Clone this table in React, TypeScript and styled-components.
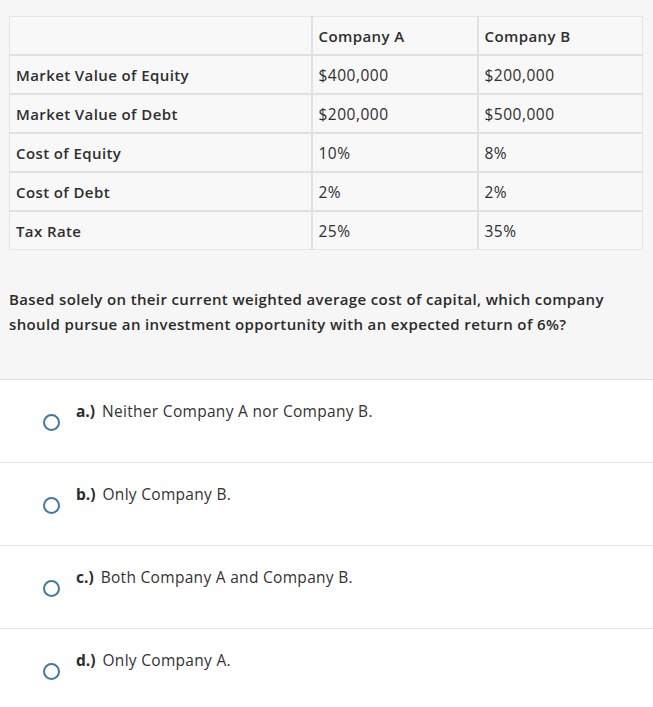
import React from "react";
import styled, { createGlobalStyle } from "styled-components";

const Global = createGlobalStyle`
  html, body { margin: 0; padding: 0; background: #ffffff; }
  body { font-family: "Open Sans", "Lato", Arial, sans-serif; color: #333333; }
`;

const Page = styled.div`
  width: 653px;
`;

const Top = styled.section`
  background: #f6f6f6;
  padding: 16px 11px 42px 9px;
  border-bottom: 1px solid #e3e3e3;
`;

const Table = styled.table`
  width: 633px;
  border-collapse: collapse;
  table-layout: fixed;
  border: 1px solid #e6e6e6;
  background: #f8f8f8;
`;

const Cell = styled.td<{ $head?: boolean; $label?: boolean }>`
  height: 37px;
  padding: 0 6px;
  border: 2px solid #e1e1e1;
  font-size: ${(p) => (p.$head || p.$label ? "15px" : "15.5px")};
  letter-spacing: ${(p) => (p.$head || p.$label ? "0.4px" : "0.5px")};
  font-weight: ${(p) => (p.$head || p.$label ? 600 : 400)};
  color: #2f2f2f;
  vertical-align: middle;
  white-space: nowrap;
  &:first-child { border-left: 1px solid #e6e6e6; }
  &:last-child { border-right: 1px solid #e6e6e6; }
`;

const Row = styled.tr`
  &:first-child td { border-top: 1px solid #e6e6e6; }
  &:last-child td { border-bottom: 1px solid #e6e6e6; }
`;

const Question = styled.p`
  margin: 37px 0 0;
  max-width: 610px;
  font-size: 15px;
  font-weight: 600;
  letter-spacing: 0.37px;
  line-height: 25px;
  color: #2b2b2b;
`;

const Option = styled.div`
  height: 82px;
  display: flex;
  align-items: flex-start;
  padding: 0 0 0 43px;
  border-bottom: 1px solid #e3e3e3;
  &:last-child { border-bottom: none; }
`;

const Radio = styled.span`
  width: 13px;
  height: 13px;
  margin-top: 34px;
  border: 2px solid #4279a0;
  border-radius: 50%;
  flex: none;
`;

const OptionText = styled.div`
  margin: 21px 0 0 16px;
  font-size: 15.5px;
  letter-spacing: 0.3px;
  line-height: 20px;
  color: #333333;
`;

const Letter = styled.b`
  font-weight: 700;
  letter-spacing: 0;
  margin-right: 7px;
  color: #2b2b2b;
`;

const rows = [
  ["Market Value of Equity", "$400,000", "$200,000"],
  ["Market Value of Debt", "$200,000", "$500,000"],
  ["Cost of Equity", "10%", "8%"],
  ["Cost of Debt", "2%", "2%"],
  ["Tax Rate", "25%", "35%"],
];

const options = [
  ["a.)", "Neither Company A nor Company B."],
  ["b.)", "Only Company B."],
  ["c.)", "Both Company A and Company B."],
  ["d.)", "Only Company A."],
];

export default function App() {
  return (
    <Page>
      <Global />
      <Top>
        <Table>
          <colgroup>
            <col style={{ width: 302 }} />
            <col style={{ width: 166 }} />
            <col style={{ width: 165 }} />
          </colgroup>
          <tbody>
            <Row>
              <Cell $head></Cell>
              <Cell $head>Company A</Cell>
              <Cell $head>Company B</Cell>
            </Row>
            {rows.map((r) => (
              <Row key={r[0]}>
                <Cell $label>{r[0]}</Cell>
                <Cell>{r[1]}</Cell>
                <Cell>{r[2]}</Cell>
              </Row>
            ))}
          </tbody>
        </Table>
        <Question>
          Based solely on their current weighted average cost of capital, which company
          should pursue an investment opportunity with an expected return of 6%?
        </Question>
      </Top>
      {options.map(([l, t]) => (
        <Option key={l}>
          <Radio />
          <OptionText>
            <Letter>{l}</Letter>
            {t}
          </OptionText>
        </Option>
      ))}
    </Page>
  );
}
